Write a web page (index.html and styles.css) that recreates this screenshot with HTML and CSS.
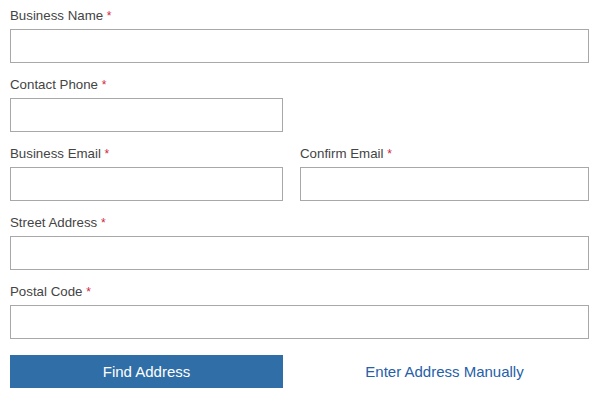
FILE: index.html
```html
<!DOCTYPE html>
<html lang="en">
<head>
<meta charset="utf-8">
<link rel="stylesheet" href="styles.css">
</head>
<body>
<form class="form">
  <div class="field">
    <label class="label">Business Name <span class="req">*</span></label>
    <input class="input" type="text">
  </div>
  <div class="row">
    <div class="field">
      <label class="label">Contact Phone <span class="req">*</span></label>
      <input class="input" type="text">
    </div>
  </div>
  <div class="row">
    <div class="field">
      <label class="label">Business Email <span class="req">*</span></label>
      <input class="input" type="text">
    </div>
    <div class="field">
      <label class="label">Confirm Email <span class="req">*</span></label>
      <input class="input" type="text">
    </div>
  </div>
  <div class="field">
    <label class="label">Street Address <span class="req">*</span></label>
    <input class="input" type="text">
  </div>
  <div class="field">
    <label class="label">Postal Code <span class="req">*</span></label>
    <input class="input" type="text">
  </div>
  <div class="row actions">
    <button class="btn" type="button">Find Address</button>
    <a class="link" href="#">Enter Address Manually</a>
  </div>
</form>
</body>
</html>
```

FILE: styles.css
```css
html, body {
  margin: 0;
  padding: 0;
  background: #ffffff;
}
body {
  padding: 8px 11px 0 10px;
  font-family: "Liberation Sans", Arial, sans-serif;
  color: #404040;
}
.form {
  display: flex;
  flex-direction: column;
  gap: 14px;
}
.row {
  display: grid;
  grid-template-columns: 273px 1fr;
  column-gap: 17px;
}
.field {
  display: flex;
  flex-direction: column;
}
.label {
  font-size: 13.3px;
  line-height: 16px;
  height: 16px;
  margin-bottom: 5px;
  color: #444444;
}
.req {
  color: #d0273e;
  font-size: 12px;
}
.input {
  box-sizing: border-box;
  height: 34px;
  width: 100%;
  margin: 0;
  border: 1px solid #a8a8a8;
  border-radius: 0;
  background: #ffffff;
  padding: 0 8px;
  font: inherit;
}
.actions {
  margin-top: 2px;
  align-items: center;
}
.btn {
  height: 33px;
  border: none;
  margin: 0;
  background: #2f6ea6;
  color: #ffffff;
  font-family: "Liberation Sans", Arial, sans-serif;
  font-size: 15px;
  cursor: pointer;
}
.link {
  text-align: center;
  color: #2660a8;
  font-size: 15px;
  text-decoration: none;
}
```
